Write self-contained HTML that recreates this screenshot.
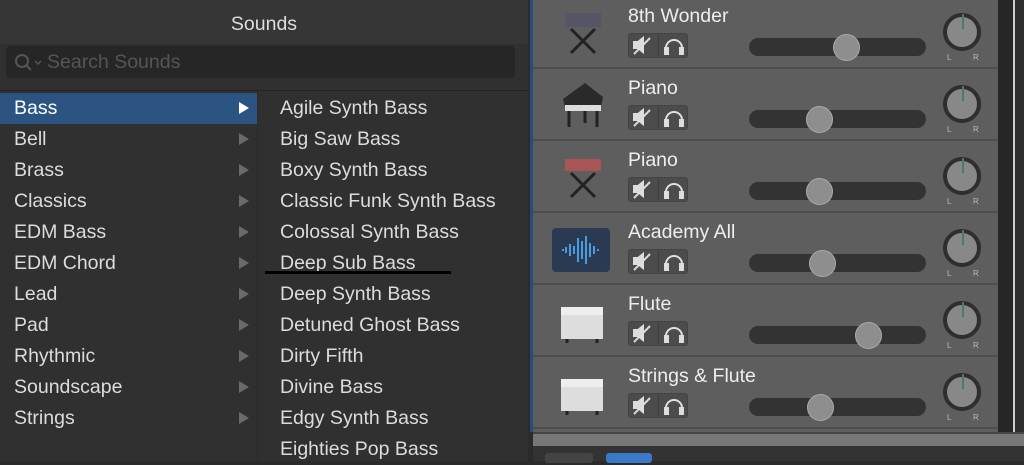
<!DOCTYPE html><html><head><style>
*{margin:0;padding:0;box-sizing:border-box}
body{width:1024px;height:461px;overflow:hidden;background:#2b2b2b;font-family:"Liberation Sans",sans-serif;position:relative}
.l{position:absolute;left:0;top:0;width:528px;height:461px;background:#303030}
.t{position:absolute;left:0;top:0;width:528px;height:44px;background:#363636;color:#ddd;font-size:19.5px;text-align:center;line-height:48px}
.s{position:absolute;left:6px;top:46px;width:509px;height:32px;background:#262626;border-radius:4px;color:#555;font-size:19.5px;line-height:32px;padding-left:41px}
.sep{position:absolute;left:0;top:90px;width:528px;height:1px;background:#242424}
.i{position:absolute;font-size:19.5px;color:#dcdcdc;height:31px;line-height:31px}
.a{position:absolute;left:239px;width:0;height:0;border-top:6px solid transparent;border-bottom:6px solid transparent;border-left:10px solid #6a6a6a}
.r{position:absolute;left:530px;top:0;width:468px;height:432px;background:#5e5e5e;border-left:3px solid #2c4a7a}
.row{position:absolute;left:0;width:468px;height:72px;border-bottom:2px solid #4e4e4e}
.nm{position:absolute;left:95px;top:8px;color:#eee;font-size:19.5px}
.bt{position:absolute;left:95px;top:36px;width:60px;height:25px;background:#4c4c4c;border-radius:3px;border:1px solid #444}
.bt:after{content:"";position:absolute;left:29px;top:0;width:1px;height:23px;background:#3e3e3e}
.tr{position:absolute;left:216px;top:41px;width:177px;height:18px;background:#333;border-radius:9px}
.kn{position:absolute;top:37px;width:27px;height:27px;border-radius:50%;background:#8e8e8e;border:1px solid #aaa}
.pk{position:absolute;left:410px;top:16px;width:38px;height:38px;border-radius:50%;background:#888;border:4px solid #2e2e2e}
.pk:after{content:"";position:absolute;left:15px;top:-3px;width:2px;height:15px;background:#4a7a6a}
.lr{position:absolute;top:56px;font-size:8px;color:#bbb}
.ic{position:absolute;left:22px;top:8px;width:56px;height:56px}
</style></head><body>
<div class="l">
<div class="t">Sounds</div>
<div class="s">Search Sounds
<svg style="position:absolute;left:8px;top:7px" width="30" height="20"><circle cx="8" cy="8" r="6" fill="none" stroke="#555" stroke-width="2"/><line x1="12" y1="12" x2="17" y2="17" stroke="#555" stroke-width="2"/><path d="M21 8l3 3 3-3" fill="none" stroke="#555" stroke-width="1.5"/></svg></div>
<div class="sep"></div>
<div style="position:absolute;left:0;top:93px;width:257px;height:31px;background:#2c5483"></div>
<div style="position:absolute;left:257px;top:91px;width:1px;height:370px;background:#2a2a2a"></div>
<div class="a" style="top:102px;border-left-color:#fff"></div>
<div class="i" style="left:14px;top:93px;color:#fff">Bass</div>
<div class="i" style="left:14px;top:124px">Bell</div><div class="a" style="top:133px"></div>
<div class="i" style="left:14px;top:155px">Brass</div><div class="a" style="top:164px"></div>
<div class="i" style="left:14px;top:186px">Classics</div><div class="a" style="top:195px"></div>
<div class="i" style="left:14px;top:217px">EDM Bass</div><div class="a" style="top:226px"></div>
<div class="i" style="left:14px;top:248px">EDM Chord</div><div class="a" style="top:257px"></div>
<div class="i" style="left:14px;top:279px">Lead</div><div class="a" style="top:288px"></div>
<div class="i" style="left:14px;top:310px">Pad</div><div class="a" style="top:319px"></div>
<div class="i" style="left:14px;top:341px">Rhythmic</div><div class="a" style="top:350px"></div>
<div class="i" style="left:14px;top:372px">Soundscape</div><div class="a" style="top:381px"></div>
<div class="i" style="left:14px;top:403px">Strings</div><div class="a" style="top:412px"></div>
<div class="i" style="left:280px;top:93px">Agile Synth Bass</div>
<div class="i" style="left:280px;top:124px">Big Saw Bass</div>
<div class="i" style="left:280px;top:155px">Boxy Synth Bass</div>
<div class="i" style="left:280px;top:186px">Classic Funk Synth Bass</div>
<div class="i" style="left:280px;top:217px">Colossal Synth Bass</div>
<div class="i" style="left:280px;top:248px">Deep Sub Bass</div>
<div style="position:absolute;left:265px;top:271px;width:186px;height:3px;background:#000"></div>
<div class="i" style="left:280px;top:279px">Deep Synth Bass</div>
<div class="i" style="left:280px;top:310px">Detuned Ghost Bass</div>
<div class="i" style="left:280px;top:341px">Dirty Fifth</div>
<div class="i" style="left:280px;top:372px">Divine Bass</div>
<div class="i" style="left:280px;top:403px">Edgy Synth Bass</div>
<div class="i" style="left:280px;top:434px">Eighties Pop Bass</div>
</div>
<div class="r">
<div class="row" style="top:-3px"><svg class="ic" viewBox="0 0 56 56"><rect x="10" y="8" width="36" height="14" fill="#556" /><path d="M16 24L40 48M40 24L16 48" stroke="#222" stroke-width="3"/></svg><div class="nm">8th Wonder</div><div class="bt"></div><div class="tr"></div><div class="kn" style="left:300px"></div><div class="pk"></div><span class="lr" style="left:414px">L</span><span class="lr" style="left:440px">R</span></div>
<div class="row" style="top:69px"><svg class="ic" viewBox="0 0 56 56"><path d="M8 22L30 6L48 20L46 30L10 30Z" fill="#2a2a2a"/><rect x="10" y="28" width="36" height="6" fill="#ddd"/><path d="M14 34v16M42 34v16M30 34v12" stroke="#222" stroke-width="3"/></svg><div class="nm">Piano</div><div class="bt"></div><div class="tr"></div><div class="kn" style="left:273px"></div><div class="pk"></div><span class="lr" style="left:414px">L</span><span class="lr" style="left:440px">R</span></div>
<div class="row" style="top:141px"><svg class="ic" viewBox="0 0 56 56"><rect x="10" y="10" width="36" height="12" fill="#a55"/><path d="M16 24L40 48M40 24L16 48" stroke="#222" stroke-width="3"/></svg><div class="nm">Piano</div><div class="bt"></div><div class="tr"></div><div class="kn" style="left:273px"></div><div class="pk"></div><span class="lr" style="left:414px">L</span><span class="lr" style="left:440px">R</span></div>
<div class="row" style="top:213px"><svg class="ic" style="left:19px;top:15px;width:58px;height:44px" viewBox="0 0 58 44"><rect width="58" height="44" rx="4" fill="#2a3a52"/><path d="M10 22h2M14 19v6M18 16v12M22 18v8M26 10v24M30 13v18M34 8v28M38 15v14M42 18v8M46 21v2" stroke="#4a9be0" stroke-width="2"/></svg><div class="nm">Academy All</div><div class="bt"></div><div class="tr"></div><div class="kn" style="left:276px"></div><div class="pk"></div><span class="lr" style="left:414px">L</span><span class="lr" style="left:440px">R</span></div>
<div class="row" style="top:285px"><svg class="ic" viewBox="0 0 56 56"><rect x="6" y="14" width="42" height="32" fill="#ddd"/><rect x="6" y="14" width="42" height="8" fill="#eee"/><path d="M12 46v4M42 46v4" stroke="#222" stroke-width="3"/></svg><div class="nm">Flute</div><div class="bt"></div><div class="tr"></div><div class="kn" style="left:322px"></div><div class="pk"></div><span class="lr" style="left:414px">L</span><span class="lr" style="left:440px">R</span></div>
<div class="row" style="top:357px"><svg class="ic" viewBox="0 0 56 56"><rect x="6" y="14" width="42" height="32" fill="#ddd"/><rect x="6" y="14" width="42" height="8" fill="#eee"/><path d="M12 46v4M42 46v4" stroke="#222" stroke-width="3"/></svg><div class="nm">Strings &amp; Flute</div><div class="bt"></div><div class="tr"></div><div class="kn" style="left:274px"></div><div class="pk"></div><span class="lr" style="left:414px">L</span><span class="lr" style="left:440px">R</span></div>
</div>
<div style="position:absolute;left:533px;top:432px;width:491px;height:14px;background:#777;border-top:2px solid #444"></div>
<div style="position:absolute;left:533px;top:446px;width:491px;height:15px;background:#333"></div>
<div style="position:absolute;left:545px;top:453px;width:48px;height:10px;background:#444;border-radius:3px"></div>
<div style="position:absolute;left:606px;top:453px;width:46px;height:10px;background:#3a78c8;border-radius:3px"></div>
<div style="position:absolute;left:998px;top:0;width:15px;height:432px;background:#262626"></div>
<div style="position:absolute;left:1013px;top:0;width:2px;height:432px;background:#ccc"></div>
<div style="position:absolute;left:1015px;top:0;width:9px;height:432px;background:#2e2e2e"></div>
<svg style="position:absolute;left:0;top:0" width="1024" height="461">
<defs><g id="b" fill="none" stroke="#ddd" stroke-width="2">
<path d="M634 42h4l5-4v14l-5-4h-4z" fill="#ddd"/><path d="M634 54L650 38"/>
<path d="M666 48a8 8 0 0 1 16 0v6M666 48v6"/><rect x="665" y="48" width="3" height="6" fill="#ddd"/><rect x="680" y="48" width="3" height="6" fill="#ddd"/>
</g></defs>
<use href="#b"/><use href="#b" y="72"/><use href="#b" y="144"/><use href="#b" y="216"/><use href="#b" y="288"/><use href="#b" y="360"/>
</svg>
</body></html>
